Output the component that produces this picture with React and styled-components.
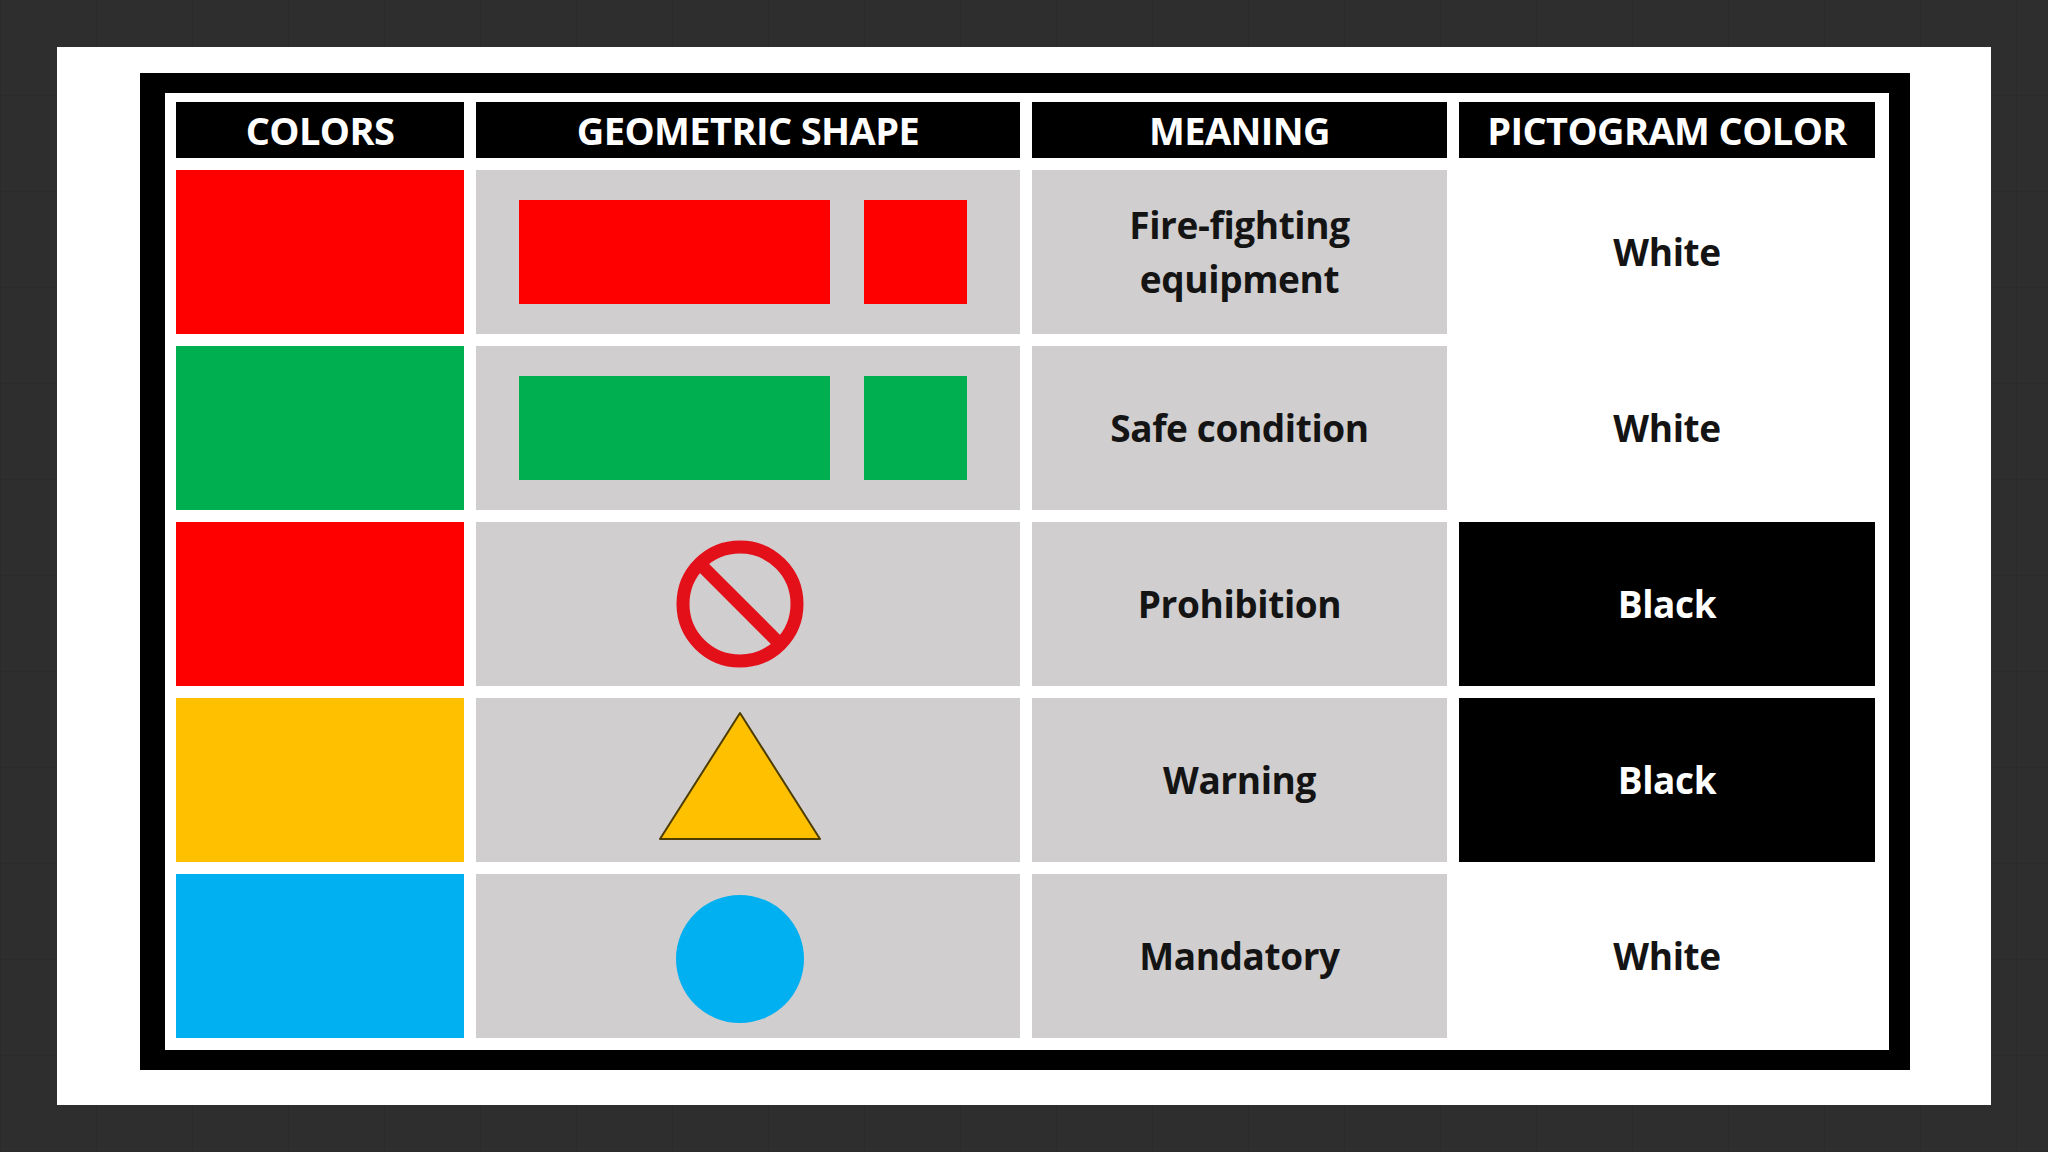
import React from "react";
import styled, { createGlobalStyle } from "styled-components";

const Global = createGlobalStyle`
  html, body { margin: 0; padding: 0; }
  body {
    background: #2e2e2e;
    font-family: "Open Sans", "Noto Sans", sans-serif;
  }
`;

const Page = styled.div`
  width: 2048px;
  height: 1152px;
  box-sizing: border-box;
  padding: 47px 57px 0 57px;
  background-color: #2e2e2e;
  background-image:
    linear-gradient(90deg, rgba(0,0,0,0.06) 1px, transparent 1px),
    linear-gradient(0deg, rgba(0,0,0,0.06) 1px, transparent 1px);
  background-size: 96px 96px;
`;

const Panel = styled.div`
  width: 1934px;
  height: 1058px;
  box-sizing: border-box;
  background: #ffffff;
  padding: 26px 81px 35px 83px;
`;

const Frame = styled.div`
  background: #000;
  padding: 20px 21px 20px 25px;
`;

const Inner = styled.div`
  background: #fff;
  padding: 9px 14px 12px 11px;
`;

const Table = styled.div`
  display: grid;
  grid-template-columns: 288px 544px 415px 416px;
  grid-template-rows: 56px repeat(5, 164px);
  column-gap: 12px;
  row-gap: 12px;
`;

const HeadCell = styled.div`
  background: #000;
  color: #fff;
  font-weight: 700;
  font-size: 38px;
  letter-spacing: -0.6px;
  display: flex;
  align-items: center;
  justify-content: center;
  line-height: 1;
`;

const Swatch = styled.div`
  background: ${(p) => p.$color};
`;

const ShapeCell = styled.div`
  background: #d0cece;
  display: flex;
  align-items: center;
  justify-content: center;
  gap: 34px;
  padding-right: ${(p) => p.$pad ?? 16}px;
`;

const Block = styled.div`
  width: ${(p) => p.$w}px;
  height: 104px;
  background: ${(p) => p.$color};
`;

const TextCell = styled.div`
  background: ${(p) => (p.$dark ? "#000" : p.$plain ? "#fff" : "#d0cece")};
  color: ${(p) => (p.$dark ? "#fff" : "#141414")};
  font-weight: 700;
  font-size: 37px;
  letter-spacing: -0.4px;
  line-height: 54px;
  text-align: center;
  display: flex;
  align-items: center;
  justify-content: center;
`;

const RED = "#ff0000";
const GREEN = "#00b050";
const YELLOW = "#ffc000";
const BLUE = "#00b0f0";

const Prohibition = () => (
  <svg width="134" height="134" viewBox="0 0 134 134">
    <circle cx="67" cy="67" r="57" fill="none" stroke="#e3101a" strokeWidth="13" />
    <line x1="27" y1="27" x2="107" y2="107" stroke="#e3101a" strokeWidth="13" />
  </svg>
);

const Triangle = () => (
  <svg width="164" height="130" viewBox="0 0 164 130" style={{ marginTop: "-8px" }}>
    <polygon points="82,2 2,128 162,128" fill={YELLOW} stroke="#4d3d00" strokeWidth="2" strokeLinejoin="round" />
  </svg>
);

const Dot = () => (
  <svg width="130" height="130" viewBox="0 0 130 130" style={{ marginTop: "6px" }}>
    <circle cx="65" cy="65" r="64" fill={BLUE} />
  </svg>
);

const rows = [
  {
    color: RED,
    pad: 10,
    shape: (
      <>
        <Block $w={311} $color={RED} />
        <Block $w={103} $color={RED} />
      </>
    ),
    meaning: (
      <>
        Fire-fighting
        <br />
        equipment
      </>
    ),
    picto: "White",
  },
  {
    color: GREEN,
    pad: 10,
    shape: (
      <>
        <Block $w={311} $color={GREEN} />
        <Block $w={103} $color={GREEN} />
      </>
    ),
    meaning: "Safe condition",
    picto: "White",
  },
  { color: RED, shape: <Prohibition />, meaning: "Prohibition", picto: "Black", dark: true },
  { color: YELLOW, shape: <Triangle />, meaning: "Warning", picto: "Black", dark: true },
  { color: BLUE, shape: <Dot />, meaning: "Mandatory", picto: "White" },
];

export default function App() {
  return (
    <>
      <Global />
      <Page>
        <Panel>
          <Frame>
            <Inner>
              <Table>
                <HeadCell>COLORS</HeadCell>
                <HeadCell>GEOMETRIC SHAPE</HeadCell>
                <HeadCell>MEANING</HeadCell>
                <HeadCell>PICTOGRAM COLOR</HeadCell>
                {rows.map((r, i) => (
                  <React.Fragment key={i}>
                    <Swatch $color={r.color} />
                    <ShapeCell $pad={r.pad}>{r.shape}</ShapeCell>
                    <TextCell>{r.meaning}</TextCell>
                    <TextCell $dark={r.dark} $plain={!r.dark}>
                      {r.picto}
                    </TextCell>
                  </React.Fragment>
                ))}
              </Table>
            </Inner>
          </Frame>
        </Panel>
      </Page>
    </>
  );
}
